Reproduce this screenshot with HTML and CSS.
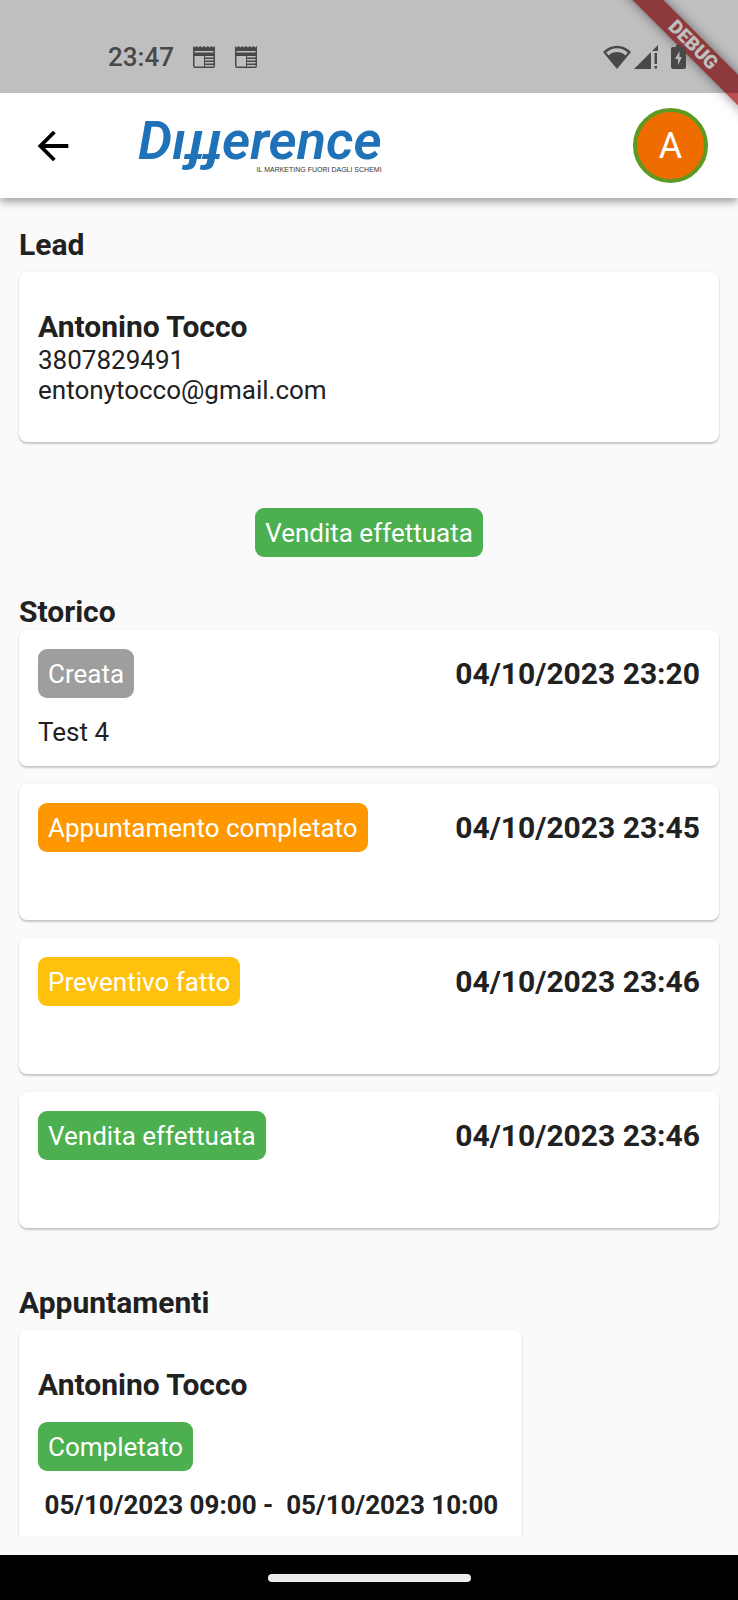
FILE: index.html
```
<!DOCTYPE html>
<html lang="it">
<head>
<meta charset="utf-8">
<meta name="viewport" content="width=device-width, initial-scale=1">
<title>Difference - Lead</title>
<link rel="stylesheet" href="styles.css">
</head>
<body>
<div class="app">
  <header class="top">
    <div class="statusbar">
      <span class="clock">23:47</span>
      <svg class="notice" viewBox="0 0 24 24" aria-hidden="true"><path fill-rule="evenodd" d="M1 1l1.800 1.500L4.600 1l1.800 1.500L8.200 1 10 2.500 12 1l2 1.500L15.800 1l1.800 1.500L19.400 1l1.800 1.500L23 1v20a2 2 0 0 1-2 2H3a2 2 0 0 1-2-2zM2.500 6v1.500h19V6zM2.500 11v10.500H12V11zM13 11v1.500h8.500V11zm0 3v1.500h8.500V14zm0 3v1.500h8.500V17zm0 3v1.500h8.500V20z"/></svg>
      <svg class="notice" viewBox="0 0 24 24" aria-hidden="true"><path fill-rule="evenodd" d="M1 1l1.800 1.500L4.600 1l1.800 1.500L8.200 1 10 2.500 12 1l2 1.500L15.800 1l1.800 1.500L19.400 1l1.800 1.500L23 1v20a2 2 0 0 1-2 2H3a2 2 0 0 1-2-2zM2.500 6v1.500h19V6zM2.500 11v10.500H12V11zM13 11v1.500h8.500V11zm0 3v1.500h8.500V14zm0 3v1.500h8.500V17zm0 3v1.500h8.500V20z"/></svg>
      <span class="signals">
        <svg width="28" height="24" viewBox="0 0 28 24" aria-hidden="true"><path fill-rule="evenodd" d="M14 24L0 7C8-1.500 20-1.500 28 7zM3.200 7.600l2.400 2.800C10.500 6 17.500 6 22.400 10.400l2.400-2.800C18.500 1.800 9.500 1.800 3.200 7.600z"/></svg>
        <svg width="24" height="24" viewBox="0 0 24 24" aria-hidden="true"><path d="M0 24L17 7v17zM18 6l6-6v6zM20.500 8H23v11h-2.500zM20.500 21H23v2.500h-2.500z"/></svg>
        <svg class="battery" width="15" height="24" viewBox="0 0 15 24" aria-hidden="true"><path fill-rule="evenodd" d="M5 0h5v2h3a2 2 0 0 1 2 2v18a2 2 0 0 1-2 2H2a2 2 0 0 1-2-2V4a2 2 0 0 1 2-2h3zM8.500 6L4 14h3v6l4-8H8.500z"/></svg>
      </span>
    </div>
    <div class="toolbar">
      <button class="back" type="button" aria-label="Indietro">
        <svg viewBox="0 0 24 24" aria-hidden="true"><path d="M20 11H7.830l5.590-5.590L12 4l-8 8 8 8 1.410-1.410L7.830 13H20v-2z"/></svg>
      </button>
      <div class="logo">
        <span class="wordmark">Dıɟɟerence</span>
        <span class="tagline">IL MARKETING FUORI DAGLI SCHEMI</span>
      </div>
      <button class="avatar" type="button">A</button>
    </div>
    <div class="debug"><span>DEBUG</span></div>
  </header>

  <main class="content">
    <h2 class="heading spaced">Lead</h2>
    <section class="card person">
      <h3 class="name">Antonino Tocco</h3>
      <p class="text">3807829491</p>
      <p class="text">entonytocco@gmail.com</p>
    </section>

    <div class="state"><span class="chip green">Vendita effettuata</span></div>

    <h2 class="heading">Storico</h2>
    <div class="history">
      <article class="card entry">
        <div class="row"><span class="chip grey">Creata</span><time class="date">04/10/2023 23:20</time></div>
        <p class="text">Test 4</p>
      </article>
      <article class="card entry">
        <div class="row"><span class="chip orange">Appuntamento completato</span><time class="date">04/10/2023 23:45</time></div>
        <p class="text"></p>
      </article>
      <article class="card entry">
        <div class="row"><span class="chip amber">Preventivo fatto</span><time class="date">04/10/2023 23:46</time></div>
        <p class="text"></p>
      </article>
      <article class="card entry">
        <div class="row"><span class="chip green">Vendita effettuata</span><time class="date">04/10/2023 23:46</time></div>
        <p class="text"></p>
      </article>
    </div>

    <h2 class="heading spaced appointments">Appuntamenti</h2>
    <article class="card person appointment">
      <h3 class="name">Antonino Tocco</h3>
      <span class="chip green">Completato</span>
      <p class="text period"> 05/10/2023 09:00 -  05/10/2023 10:00</p>
    </article>
  </main>

  <footer class="navbar"><span class="handle"></span></footer>
</div>
</body>
</html>
```
FILE: styles.css
```
* { box-sizing: border-box; }

body {
  margin: 0;
  background: #fafafa;
  color: #212121;
  font-family: Roboto, "Liberation Sans", sans-serif;
  font-size: 26px;
  line-height: 30px;
}

h2, h3, p { margin: 0; }

button {
  padding: 0;
  border: 0;
  background: none;
  font: inherit;
}

.app {
  display: flex;
  flex-direction: column;
  height: 100vh;
}

/* Header */
.top {
  position: relative;
  z-index: 1;
  flex: none;
  background: #fff;
  box-shadow: 0 4px 8px rgba(0, 0, 0, .35);
}

.statusbar {
  position: relative;
  z-index: 2;
  display: flex;
  align-items: center;
  gap: 18px;
  height: 93px;
  padding: 21px 52px 0 108px;
  background: rgba(0, 0, 0, .25);
  color: #484848;
  fill: #484848;
}

.clock { font-weight: 500; }

.notice {
  width: 24px;
  height: 24px;
}

.signals {
  display: flex;
  gap: 3px;
  margin-left: auto;
}

.battery { margin-left: 10px; }

.toolbar {
  display: flex;
  align-items: center;
  height: 105px;
  padding: 0 30px;
}

.back {
  width: 46px;
  height: 46px;
}

.back svg {
  display: block;
  width: 46px;
  height: 46px;
}

.logo {
  display: flex;
  flex-direction: column;
  gap: 2px;
  margin-left: 62px;
}

.wordmark {
  color: #1f72b8;
  font: italic 600 54px/46px Roboto, "Liberation Sans", sans-serif;
}

.tagline {
  align-self: flex-end;
  color: #333;
  font: 7px/8px "Liberation Sans", sans-serif;
}

.avatar {
  width: 75px;
  height: 75px;
  margin-left: auto;
  border: 4px solid #5c9a22;
  border-radius: 50%;
  background: #ef6c00;
  color: #fff;
  font-size: 36px;
}

.debug {
  position: absolute;
  top: 0;
  right: 0;
  z-index: 1;
  width: 150px;
  height: 150px;
  overflow: hidden;
}

.debug span {
  position: absolute;
  top: 34px;
  right: -55px;
  width: 200px;
  transform: rotate(45deg);
  background: rgba(170, 28, 32, .78);
  box-shadow: 0 0 12px rgba(0, 0, 0, .45);
  color: #fff;
  font-size: 19px;
  font-weight: 900;
  line-height: 22px;
  text-align: center;
}

/* Page content */
.content {
  flex: 1;
  min-height: 0;
  margin-bottom: 19px;
  padding: 29px 19px 0;
  overflow: auto;
  scrollbar-width: none;
}

.heading,
.name {
  font-size: 30px;
  font-weight: 700;
  line-height: 36px;
}

.spaced { margin-bottom: 9px; }

.card {
  border-radius: 8px;
  background: #fff;
  box-shadow: 0 2px 2px rgba(0, 0, 0, .2), 0 0 2px rgba(0, 0, 0, .08);
}

.person { padding: 37px 19px; }

.text { min-height: 30px; }

.chip {
  padding: 10px 10px 8px;
  border-radius: 9px;
  color: #fff;
  line-height: 31px;
}

.green { background: #4caf50; }
.grey { background: #9e9e9e; }
.orange { background: #ff9800; }
.amber { background: #ffc10c; }

.state {
  display: flex;
  justify-content: center;
  padding: 66px 0 37px;
}

.history {
  display: flex;
  flex-direction: column;
  gap: 18px;
}

.entry {
  display: flex;
  flex-direction: column;
  gap: 19px;
  padding: 19px;
}

.row {
  display: flex;
  align-items: center;
  justify-content: space-between;
}

.date {
  font-size: 30px;
  font-weight: 700;
}

.appointments { margin-top: 57px; }

.appointment {
  display: flex;
  flex-direction: column;
  align-items: flex-start;
  gap: 19px;
  width: fit-content;
  padding-right: 24px;
}

.period {
  font-weight: 700;
  white-space: pre;
}

/* System navigation */
.navbar {
  display: flex;
  flex: none;
  align-items: center;
  justify-content: center;
  height: 45px;
  background: #000;
}

.handle {
  width: 203px;
  height: 8px;
  border-radius: 4px;
  background: #ececec;
}
```
